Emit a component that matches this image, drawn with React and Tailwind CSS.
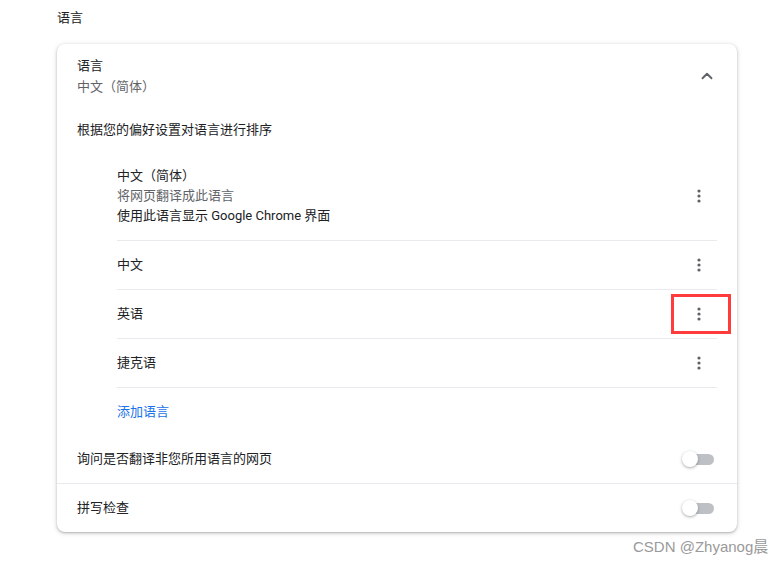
import { ChevronUp } from "lucide-react";

const font = {
  fontFamily: 'Roboto, "Noto Sans CJK SC", sans-serif',
};

function MoreDots() {
  return (
    <svg width="20" height="20" viewBox="0 0 20 20" className="text-[#5f6368]">
      <circle cx="10" cy="5" r="1.6" fill="currentColor" />
      <circle cx="10" cy="10" r="1.6" fill="currentColor" />
      <circle cx="10" cy="15" r="1.6" fill="currentColor" />
    </svg>
  );
}

function Toggle() {
  return (
    <div className="relative w-[32px] h-[16px] flex items-center">
      <div className="w-[30px] h-[11px] ml-[2px] rounded-full bg-[#bdc1c6]" />
      <div className="absolute left-0 top-0 w-[16px] h-[16px] rounded-full bg-white shadow-[0_1px_3px_rgba(60,64,67,0.45)]" />
    </div>
  );
}

function LangItem({ name, lines, height, highlight }) {
  return (
    <div
      className={`flex items-center justify-between border-b border-[#e8eaed] ${height}`}>
      <div className="flex flex-col">
        <span className="text-[#202124] leading-[20px]">{name}</span>
        {lines}
      </div>
      <div className="relative w-[36px] h-[36px] flex items-center justify-center">
        <MoreDots />
        {highlight && (
          <div className="absolute left-[-10px] top-[-2px] w-[60px] h-[40px] border-[3px] border-[#ff3b3b]" />
        )}
      </div>
    </div>
  );
}

export default function App() {
  return (
    <div className="w-[783px] h-[565px] bg-white relative overflow-hidden text-[13px]" style={font}>
      <div className="pl-[57px] pt-[8px] h-[44px] text-[#202124] leading-[20px]">语言</div>
      <div className="ml-[57px] w-[680px] bg-white rounded-[8px] shadow-[0_1px_2px_rgba(60,64,67,0.3),0_1px_4px_1px_rgba(60,64,67,0.15)]">
        <div className="h-[64px] flex items-center justify-between pl-[20px] pr-[20px]">
          <div className="flex flex-col">
            <span className="text-[#202124] leading-[21px]">语言</span>
            <span className="text-[#5f6368] leading-[21px]">中文（简体）</span>
          </div>
          <ChevronUp size={18} strokeWidth={2.5} className="text-[#5f6368] mr-[1px]" />
        </div>
        <div className="h-[44px] flex items-center pl-[20px] text-[#202124]">
          根据您的偏好设置对语言进行排序
        </div>
        <div className="pl-[60px] pr-[20px]">
          <LangItem
            name="中文（简体）"
            height="h-[89px]"
            lines={
              <>
                <span className="text-[#5f6368] leading-[20px]">将网页翻译成此语言</span>
                <span className="text-[#202124] leading-[20px]">使用此语言显示 Google Chrome 界面</span>
              </>
            }
          />
          <LangItem name="中文" height="h-[49px]" />
          <LangItem name="英语" height="h-[49px]" highlight />
          <LangItem name="捷克语" height="h-[49px]" />
          <div className="h-[47px] flex items-center text-[#1a73e8]">添加语言</div>
        </div>
        <div className="h-[49px] flex items-center justify-between pl-[20px] pr-[23px] border-b border-[#e8eaed] text-[#202124]">
          <span>询问是否翻译非您所用语言的网页</span>
          <Toggle />
        </div>
        <div className="h-[48px] flex items-center justify-between pl-[20px] pr-[23px] text-[#202124]">
          <span>拼写检查</span>
          <Toggle />
        </div>
      </div>
      <div className="absolute left-[633px] top-[537px] text-[15px] text-[#9a9a9a] leading-[20px]" style={{ fontFamily: '"Liberation Sans", "Noto Sans CJK SC", sans-serif' }}>
        CSDN @Zhyanog晨
      </div>
    </div>
  );
}
